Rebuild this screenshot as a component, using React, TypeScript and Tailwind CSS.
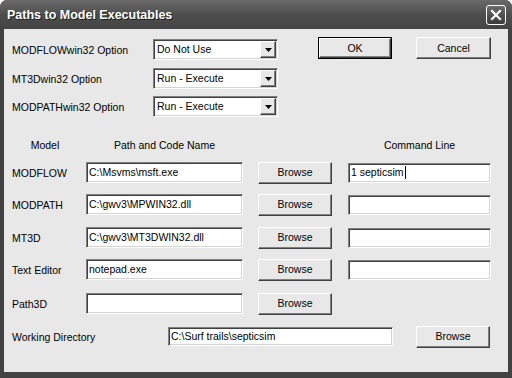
import React from "react";

const sunken =
  "bg-white border border-t-[#808080] border-l-[#808080] border-r-white border-b-white shadow-[inset_1px_1px_0_#404040,inset_-1px_-1px_0_#d4d4d4]";
const raised =
  "bg-[#e8e8e8] border border-t-white border-l-white border-r-[#404040] border-b-[#404040] shadow-[inset_-1px_-1px_0_#808080]";

function Dropdown({ value }: { value: string }) {
  return (
    <div className={`w-[125px] h-[21px] p-[1px] flex items-stretch ${sunken}`}>
      <span className="flex-1 flex items-center pl-[2px] leading-none">{value}</span>
      <div className={`w-[16px] flex items-center justify-center ${raised}`}>
        <svg width="7" height="4" viewBox="0 0 7 4">
          <polygon points="0,0 7,0 3.5,4" fill="#000" />
        </svg>
      </div>
    </div>
  );
}

function Btn({ label, w = "w-[74px]", def = false }: { label: string; w?: string; def?: boolean }) {
  if (def) {
    return (
      <div className={`${w} h-[22px] border border-black flex`}>
        <div className={`flex-1 flex items-center justify-center leading-none ${raised}`}>{label}</div>
      </div>
    );
  }
  return (
    <div className={`${w} h-[22px] flex items-center justify-center leading-none ${raised}`}>{label}</div>
  );
}

function Field({ value, w, h = "h-[21px]", cursor = false }: { value: string; w: string; h?: string; cursor?: boolean }) {
  return (
    <div className={`${w} ${h} flex items-center pl-[2px] leading-none ${sunken}`}>
      <span>{value}</span>
      {cursor && <span className="inline-block w-[1px] h-[13px] bg-black ml-[1px]" />}
    </div>
  );
}

function ModelRow({
  label,
  path,
  cmd,
  cursor = false,
  showCmd = true,
  mt,
}: {
  label: string;
  path: string;
  cmd?: string;
  cursor?: boolean;
  showCmd?: boolean;
  mt: string;
}) {
  return (
    <div className={`flex items-center h-[23px] ${mt}`}>
      <div className="w-[74px] pt-[2px]">{label}</div>
      <Field value={path} w="w-[157px]" />
      <div className="ml-[15px]">
        <Btn label="Browse" w="w-[74px]" />
      </div>
      {showCmd && (
        <div className="ml-[16px]">
          <Field value={cmd ?? ""} w="w-[143px]" h="h-[20px]" cursor={cursor} />
        </div>
      )}
    </div>
  );
}

export default function App() {
  return (
    <div className="w-[512px] h-[378px] bg-white font-['Liberation_Sans',Arial,sans-serif] text-[10.5px] text-black">
      <div className="w-full h-full bg-[#424242] rounded-t-[7px] flex flex-col overflow-hidden">
        {/* Title bar */}
        <div className="h-[29px] flex items-center justify-between pl-[7px] pr-[6px] bg-gradient-to-b from-[#6a6a6a] via-[#4e4e4e] to-[#444444]">
          <span className="text-white font-bold text-[12.5px] pt-[1px] [text-shadow:1px_1px_0_#1e1e1e]">
            Paths to Model Executables
          </span>
          <div className="w-[20px] h-[20px] rounded-[3px] border border-white bg-gradient-to-b from-[#6a6a6a] to-[#3c3c3c] flex items-center justify-center">
            <svg width="12" height="12" viewBox="0 0 12 12">
              <path d="M2 2 L10 10 M10 2 L2 10" stroke="#fff" strokeWidth="2.2" strokeLinecap="square" />
            </svg>
          </div>
        </div>
        {/* Body */}
        <div className="flex-1 px-[4px] pb-[6px] flex">
          <div className="flex-1 bg-[#e8e8e8] pl-[8px] flex flex-col">
            {/* Options */}
            <div className="flex pt-[8px]">
              <div className="flex flex-col">
                <div className="flex items-center mt-[2px]">
                  <div className="w-[141px] pt-[2px]">MODFLOWwin32 Option</div>
                  <Dropdown value="Do Not Use" />
                </div>
                <div className="flex items-center mt-[8px]">
                  <div className="w-[141px] pt-[2px]">MT3Dwin32 Option</div>
                  <Dropdown value="Run - Execute" />
                </div>
                <div className="flex items-center mt-[7px]">
                  <div className="w-[141px] pt-[2px]">MODPATHwin32 Option</div>
                  <Dropdown value="Run - Execute" />
                </div>
              </div>
              <div className="flex ml-[40px] gap-[24px] items-start">
                <Btn label="OK" w="w-[74px]" def />
                <Btn label="Cancel" w="w-[75px]" />
              </div>
            </div>
            {/* Header */}
            <div className="flex mt-[22px] h-[13px] items-center">
              <div className="w-[66px] text-center">Model</div>
              <div className="ml-[8px] w-[157px] text-center">Path and Code Name</div>
              <div className="ml-[105px] w-[143px] text-center">Command Line</div>
            </div>
            <ModelRow label="MODFLOW" path="C:\Msvms\msft.exe" cmd="1 septicsim" cursor mt="mt-[9px]" />
            <ModelRow label="MODPATH" path="C:\gwv3\MPWIN32.dll" cmd="" mt="mt-[9px]" />
            <ModelRow label="MT3D" path="C:\gwv3\MT3DWIN32.dll" cmd="" mt="mt-[10px]" />
            <ModelRow label="Text Editor" path="notepad.exe" cmd="" mt="mt-[9px]" />
            <ModelRow label="Path3D" path="" showCmd={false} mt="mt-[11px]" />
            <div className="flex items-center h-[23px] mt-[10px]">
              <div className="w-[156px] pt-[2px]">Working Directory</div>
              <Field value="C:\Surf trails\septicsim" w="w-[225px]" h="h-[19px]" />
              <div className="ml-[23px]">
                <Btn label="Browse" w="w-[74px]" />
              </div>
            </div>
          </div>
        </div>
      </div>
    </div>
  );
}
